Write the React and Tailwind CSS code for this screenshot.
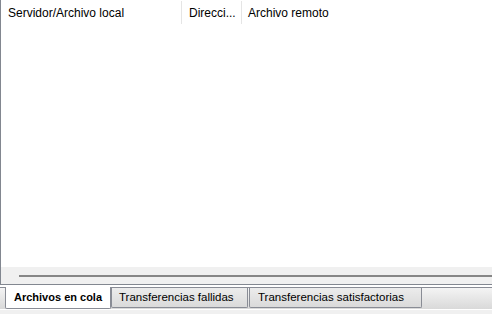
export default function App() {
  return (
    <div className="w-[492px] h-[314px] overflow-hidden bg-[#f0f0f0] flex flex-col text-[12px] text-black whitespace-nowrap" style={{ fontFamily: '"Liberation Sans", Arial, sans-serif' }}>
      {/* list view */}
      <div className="h-[285px] bg-white border-l border-b border-[#828790] flex flex-col">
        <div className="h-[25px] flex items-stretch">
          <div className="w-[180px] pl-[7px] flex items-center">Servidor/Archivo local</div>
          <div className="w-px my-[1px] bg-[#e5e5e5]"></div>
          <div className="w-[59px] pl-[7px] flex items-center">Direcci...</div>
          <div className="w-px my-[1px] bg-[#e5e5e5]"></div>
          <div className="pl-[6px] flex items-center">Archivo remoto</div>
        </div>
        <div className="flex-1"></div>
        <div className="h-[17px] bg-[#f0f0f0] flex items-center pl-[18px]">
          <div className="flex-1 h-[2px] bg-[#868686]"></div>
        </div>
      </div>

      {/* tab strip */}
      <div className="h-[2px] bg-white"></div>
      <div className="h-[22px] border-t border-[#898c95] bg-gradient-to-b from-[#f4f4f4] to-[#d9d9d9] flex items-start pl-[5px] text-[11.5px]">
        <div className="-mt-px h-[22px] w-[106px] shrink-0 bg-white border-x border-b border-[#898c95] rounded-b-[2px] pl-[8px] flex items-center font-bold text-[11px]">
          Archivos en cola
        </div>
        <div className="h-[20px] w-[137px] shrink-0 bg-gradient-to-b from-[#ececec] to-[#dadada] border-x border-b border-[#898c95] rounded-b-[2px] pl-[7px] flex items-center">
          Transferencias fallidas
        </div>
        <div className="ml-px h-[20px] w-[173px] shrink-0 bg-gradient-to-b from-[#ececec] to-[#dadada] border-x border-b border-[#898c95] rounded-b-[2px] pl-[8px] flex items-center">
          Transferencias satisfactorias
        </div>
      </div>
      <div className="h-px bg-white"></div>
      <div className="flex-1 bg-[#f0f0f0]"></div>
    </div>
  )
}
